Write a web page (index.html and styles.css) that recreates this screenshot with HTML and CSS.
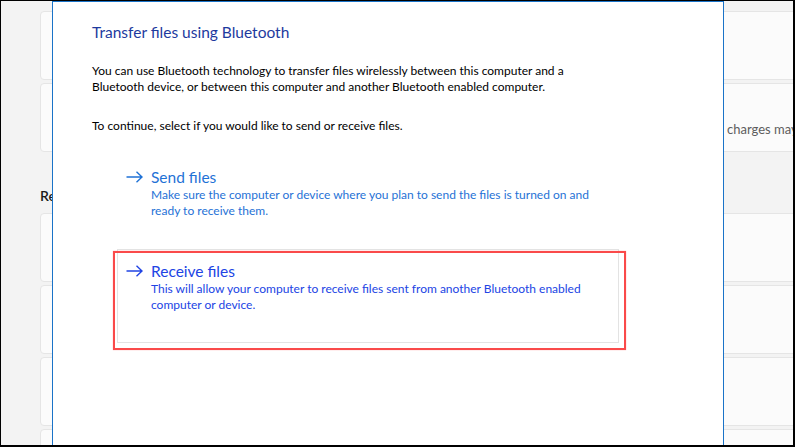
FILE: index.html
```html
<!DOCTYPE html>
<html lang="en">
<head>
    <meta charset="UTF-8">
    <meta name="viewport" content="width=device-width, initial-scale=1.0">
    <title>Transfer files using Bluetooth</title>
    <link rel="stylesheet" href="styles.css">
</head>
<body>
<div class="screen">
    <div class="settings">
        <div class="card"></div>
        <div class="card"><span class="card-note">charges may</span></div>
        <h2 class="section-title">Related settings</h2>
        <div class="card"></div>
        <div class="card"></div>
        <div class="card"></div>
        <div class="card"></div>
    </div>

    <div class="dialog">
        <div class="dialog-body">
            <h1 class="title">Transfer files using Bluetooth</h1>
            <p class="intro">You can use Bluetooth technology to transfer files wirelessly between this computer and a<br>Bluetooth device, or between this computer and another Bluetooth enabled computer.</p>
            <p class="prompt">To continue, select if you would like to send or receive files.</p>

            <div class="links">
                <div class="cmd-link send">
                    <svg class="arrow" width="17" height="12" viewBox="0 0 17 12"><path d="M0.5 6H16M10.5 0.8L16 6L10.5 11.2" fill="none" stroke="currentColor" stroke-width="1.4"/></svg>
                    <span class="cmd-title">Send files</span>
                    <span class="cmd-desc">Make sure the computer or device where you plan to send the files is turned on and<br>ready to receive them.</span>
                </div>
                <div class="cmd-link receive">
                    <svg class="arrow" width="17" height="12" viewBox="0 0 17 12"><path d="M0.5 6H16M10.5 0.8L16 6L10.5 11.2" fill="none" stroke="currentColor" stroke-width="1.4"/></svg>
                    <span class="cmd-title">Receive files</span>
                    <span class="cmd-desc">This will allow your computer to receive files sent from another Bluetooth enabled<br>computer or device.</span>
                    <div class="highlight"></div>
                </div>
            </div>
        </div>
    </div>
</div>
</body>
</html>
```

FILE: styles.css
```css
body {
    margin: 0;
    background: #000;
    font-family: "Segoe UI", Lato, "Noto Sans", sans-serif;
}

.screen {
    position: relative;
    width: 792px;
    height: 444px;
    margin: 1px 2px 2px 1px;
    overflow: hidden;
    background: #f3f3f3;
}

.settings {
    padding: 10px 0 0 39px;
}

.card {
    box-sizing: border-box;
    width: 800px;
    height: 69px;
    margin-bottom: 3px;
    background: #fbfbfb;
    border: 1px solid #e5e5e5;
    border-radius: 4px;
}

.card-note {
    display: block;
    padding: 36px 0 0 686px;
    font-size: 13px;
    line-height: 18px;
    color: #5d5d5d;
    white-space: nowrap;
}

.section-title {
    margin: 34px 0 7px;
    font-size: 14px;
    line-height: 20px;
    font-weight: 600;
    color: #1b1b1b;
}

.dialog {
    position: absolute;
    left: 51px;
    top: 0;
    bottom: 0;
    width: 672px;
    box-sizing: border-box;
    background: #fff;
    border: 1px solid #1a73c8;
    border-bottom: none;
}

.dialog-body {
    padding: 20px 0 0 39px;
}

.title {
    margin: 0;
    font-size: 15.5px;
    line-height: 20px;
    font-weight: normal;
    color: #1d3a9e;
}

.intro,
.prompt {
    margin: 21px 0 0;
    font-size: 12px;
    line-height: 16px;
    color: #000;
}

.prompt {
    margin-top: 23px;
}

.links {
    margin: 21px 0 0 25px;
    width: 502px;
}

.cmd-link {
    position: relative;
    box-sizing: border-box;
    height: 94px;
    padding: 11px 0 0 8px;
    border: 1px solid transparent;
    display: grid;
    grid-template-columns: 17px 1fr;
    grid-template-rows: 20px auto;
    column-gap: 8px;
    align-content: start;
}

.cmd-link.send {
    color: #1f72d6;
}

.cmd-link.receive {
    color: #2144e4;
    border-color: #e3e3e3;
}

.arrow {
    align-self: center;
}

.cmd-title {
    font-size: 15.5px;
    line-height: 20px;
}

.cmd-desc {
    grid-column: 2;
    font-size: 12px;
    line-height: 16px;
}

.highlight {
    position: absolute;
    left: -5px;
    top: 1px;
    right: -8px;
    bottom: -8px;
    border: 2px solid #fa4a4a;
    box-shadow: 0 0 1px rgba(255, 90, 90, 0.6);
}
```
